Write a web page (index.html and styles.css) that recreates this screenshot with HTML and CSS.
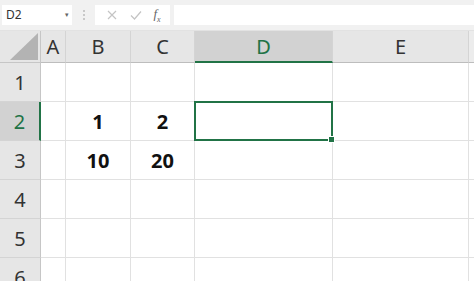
FILE: index.html
```html
<!DOCTYPE html>
<html lang="en">
<head>
    <meta charset="UTF-8">
    <meta name="viewport" content="width=device-width, initial-scale=1.0">
    <title>Sheet</title>
    <link rel="stylesheet" href="styles.css">
</head>
<body>

    <div class="toolbar">
        <div class="name-box">
            <span>D2</span>
            <span class="caret">&#9662;</span>
        </div>
        <div class="grip"><i></i><i></i><i></i></div>
        <div class="fx-buttons">
            <svg width="12" height="12" viewBox="0 0 12 12"><path d="M2 2 L10 10 M10 2 L2 10" stroke="#c4c4c4" stroke-width="1.2" fill="none"/></svg>
            <svg width="14" height="12" viewBox="0 0 14 12"><path d="M2 6.5 L5.5 10 L12 2.5" stroke="#c4c4c4" stroke-width="1.2" fill="none"/></svg>
            <span class="fx">f<sub>x</sub></span>
        </div>
        <div class="formula"></div>
    </div>

    <div class="sheet">
        <div class="corner"><div class="tri"></div></div>
        <div class="col-head">A</div>
        <div class="col-head">B</div>
        <div class="col-head">C</div>
        <div class="col-head active">D</div>
        <div class="col-head">E</div>
        <div class="col-head rest"></div>

        <div class="row-head">1</div>
        <div class="cell"></div><div class="cell"></div><div class="cell"></div><div class="cell"></div><div class="cell"></div><div class="cell rest"></div>

        <div class="row-head active">2</div>
        <div class="cell"></div><div class="cell num">1</div><div class="cell num">2</div><div class="cell selected"></div><div class="cell"></div><div class="cell rest"></div>

        <div class="row-head">3</div>
        <div class="cell"></div><div class="cell num">10</div><div class="cell num">20</div><div class="cell"></div><div class="cell"></div><div class="cell rest"></div>

        <div class="row-head">4</div>
        <div class="cell"></div><div class="cell"></div><div class="cell"></div><div class="cell"></div><div class="cell"></div><div class="cell rest"></div>

        <div class="row-head">5</div>
        <div class="cell"></div><div class="cell"></div><div class="cell"></div><div class="cell"></div><div class="cell"></div><div class="cell rest"></div>

        <div class="row-head">6</div>
        <div class="cell"></div><div class="cell"></div><div class="cell"></div><div class="cell"></div><div class="cell"></div><div class="cell rest"></div>
    </div>

</body>
</html>
```

FILE: styles.css
```css
* {
    box-sizing: border-box;
}
body {
    margin: 0;
    width: 474px;
    height: 281px;
    overflow: hidden;
    background: #fff;
    font-family: "Noto Sans", "Open Sans", sans-serif;
    color: #222;
}

.toolbar {
    display: flex;
    align-items: center;
    height: 31px;
    padding: 5px 0 6px 2px;
    background: #f1f1f1;
    border-bottom: 1px solid #e2e2e2;
}
.name-box {
    display: flex;
    align-items: center;
    justify-content: space-between;
    width: 70px;
    height: 20px;
    padding: 0 3px 0 4px;
    background: #fff;
    font-size: 12px;
    color: #333;
}
.caret {
    font-size: 7px;
    color: #666;
}
.grip {
    display: flex;
    flex-direction: column;
    gap: 2px;
    width: 23px;
    align-items: center;
}
.grip i {
    width: 2px;
    height: 2px;
    background: #c8c8c8;
}
.fx-buttons {
    display: flex;
    align-items: center;
    justify-content: space-around;
    width: 75px;
    height: 20px;
    padding: 0 4px 0 6px;
    background: #fff;
}
.fx {
    font-family: "Liberation Serif", serif;
    font-style: italic;
    font-size: 13px;
    color: #666;
}
.fx sub {
    font-size: 8px;
}
.formula {
    flex: 1;
    height: 20px;
    margin-left: 4px;
    background: #fff;
}

.sheet {
    display: grid;
    grid-template-columns: 41px 25px 65px 64px 138px 136px 1fr;
    grid-template-rows: 32px;
    grid-auto-rows: 39px;
}
.corner,
.col-head,
.row-head {
    display: flex;
    align-items: center;
    justify-content: center;
    background: #e6e6e6;
    font-size: 20px;
    color: #333;
}
.corner {
    align-items: flex-end;
    justify-content: flex-end;
    padding: 0 2px 2px 0;
    border-right: 1px solid #c6c6c6;
    border-bottom: 1px solid #c6c6c6;
}
.tri {
    width: 28px;
    height: 27px;
    background: #b3b3b3;
    clip-path: polygon(100% 0, 100% 100%, 0 100%);
}
.col-head {
    border-right: 1px solid #d4d4d4;
    border-bottom: 1px solid #bdbdbd;
}
.col-head.active {
    background: #d2d2d2;
    color: #217346;
    border-bottom: 2px solid #217346;
}
.col-head.rest {
    background: #ececec;
    border-right: none;
}
.row-head {
    border-right: 1px solid #c6c6c6;
    border-bottom: 1px solid #d4d4d4;
}
.row-head.active {
    background: #d2d2d2;
    color: #217346;
    border-right: 2px solid #217346;
}

.cell {
    border-right: 1px solid #e1e1e1;
    border-bottom: 1px solid #e1e1e1;
}
.cell.rest {
    border-right: none;
}
.cell.num {
    display: flex;
    align-items: center;
    justify-content: center;
    font-size: 20px;
    font-weight: bold;
    color: #111;
}
.cell.selected {
    position: relative;
}
.cell.selected::after {
    content: "";
    position: absolute;
    top: -1px;
    left: -1px;
    right: -1px;
    bottom: -1px;
    border: 2px solid #217346;
}
.cell.selected::before {
    content: "";
    position: absolute;
    right: -3px;
    bottom: -3px;
    width: 5px;
    height: 5px;
    background: #217346;
    border: 1px solid #fff;
    z-index: 1;
}
```
